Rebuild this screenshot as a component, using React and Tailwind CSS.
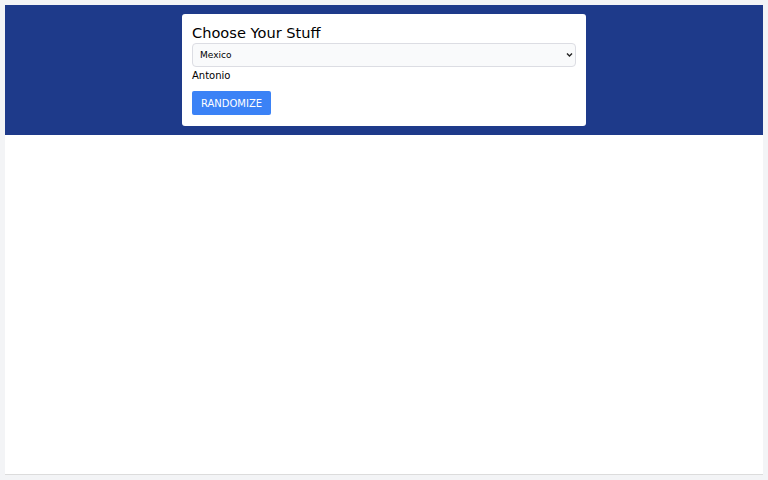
import React, { useState } from 'react';

const App = () => {
  const [country, setCountry] = useState('Mexico');

  return (
    <div className="min-h-screen bg-[#f3f4f6] p-[5px] font-['DejaVu_Sans',sans-serif]">
      <div className="h-[470px] bg-white border-b border-[#dcdcdc] flex flex-col">
        <div className="h-[130px] bg-[#1e3a8a] flex justify-center pt-[9px]">
          <div className="w-[404px] h-[112px] bg-white rounded-[3px] px-[10px] pt-[9px]">
            <h2 className="text-[14.6px] leading-[20px] text-black">Choose Your Stuff</h2>
            <div className="relative">
              <select
                value={country}
                onChange={(e) => setCountry(e.target.value)}
                className="block appearance-none w-full h-[24px] bg-[#f9fafb] border border-[#dcdde3] rounded-[4px] text-[9px] pl-[7px] pt-[2px] text-black"
              >
                <option>Mexico</option>
                <option>Canada</option>
                <option>Brazil</option>
              </select>
              <svg className="absolute right-[3px] top-[9px] pointer-events-none" width="7" height="6" viewBox="0 0 7 6">
                <path d="M1 1.5 L3.5 4 L6 1.5" fill="none" stroke="#222" strokeWidth="1.4" />
              </svg>
            </div>
            <p className="text-[10px] leading-[15px] pt-[1px] text-black">Antonio</p>
            <button className="block mt-[8px] h-[24px] w-[79px] bg-[#3b82f6] text-white text-[10px] rounded-[2px]">
              RANDOMIZE
            </button>
          </div>
        </div>
      </div>
    </div>
  );
};

export default App;
